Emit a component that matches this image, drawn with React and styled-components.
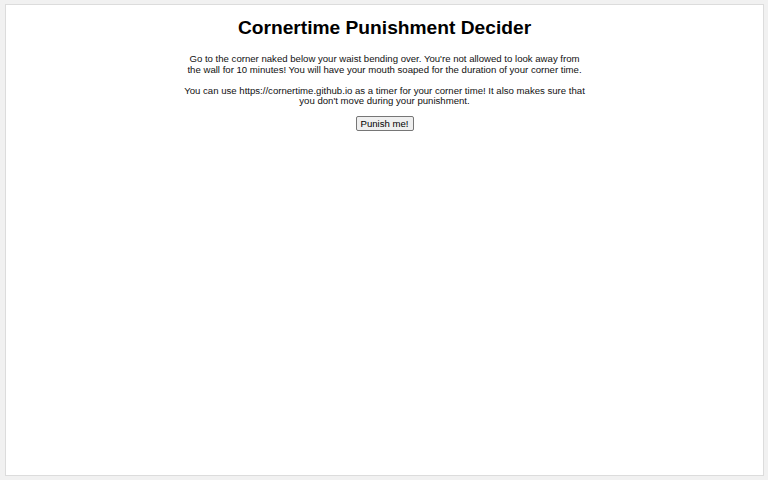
import React from "react";
import styled, { createGlobalStyle } from "styled-components";

const Global = createGlobalStyle`
  html, body { margin: 0; padding: 0; background: #f1f1f1; }
  body { font-family: "Liberation Sans", Arial, sans-serif; }
`;

const Page = styled.div`
  box-sizing: border-box;
  height: 480px;
  padding: 4px 4px 4px 5px;
`;

const Panel = styled.main`
  box-sizing: border-box;
  height: 100%;
  background: #fff;
  border: 1px solid #dcdcdc;
  display: flex;
  flex-direction: column;
  align-items: center;
  padding-top: 11px;
`;

const Title = styled.h1`
  margin: 0 0 14px;
  font-size: 19.2px;
  font-weight: bold;
  color: #000;
  line-height: 24px;
`;

const Text = styled.p`
  margin: 0 0 ${(p) => p.$gap || 10.6}px;
  max-width: 404px;
  font-size: 9.6px;
  line-height: 10.6px;
  text-align: center;
  color: #111;
`;

const Button = styled.button`
  font-family: "Liberation Sans", Arial, sans-serif;
  font-size: 9.6px;
  line-height: 11px;
  padding: 1px 4px;
  background: #efefef;
  border: 1px solid #767676;
  border-radius: 2px;
  color: #000;
`;

export default function App() {
  return (
    <>
      <Global />
      <Page>
        <Panel>
          <Title>Cornertime Punishment Decider</Title>
          <Text>
            Go to the corner naked below your waist bending over. You're not allowed to look away from
            the wall for 10 minutes! You will have your mouth soaped for the duration of your corner time.
          </Text>
          <Text $gap={8.6}>
            You can use https://cornertime.github.io as a timer for your corner time! It also makes sure
            that you don't move during your punishment.
          </Text>
          <Button>Punish me!</Button>
        </Panel>
      </Page>
    </>
  );
}
